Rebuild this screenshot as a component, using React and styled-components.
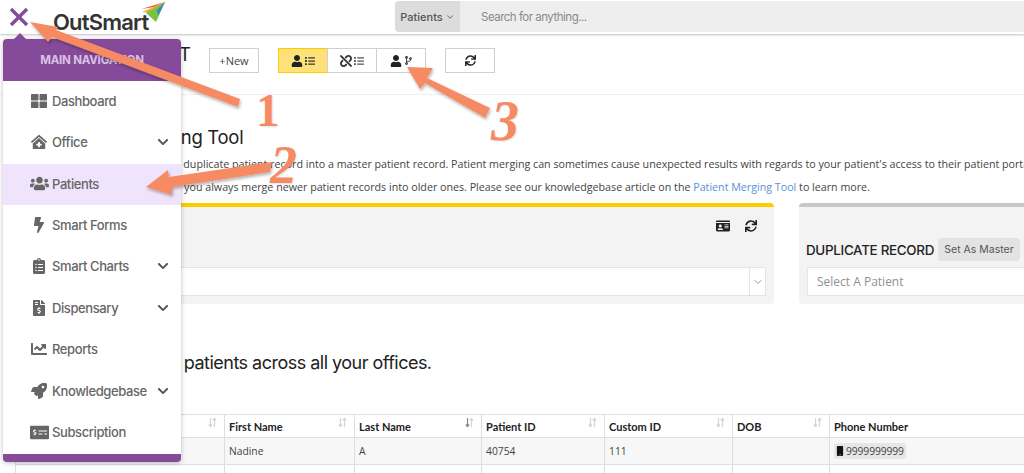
import React from 'react';
import styled, { createGlobalStyle } from 'styled-components';
import {
  FaThLarge,
  FaUsers,
  FaBolt,
  FaClipboardList,
  FaFileInvoiceDollar,
  FaChartLine,
  FaRocket,
  FaMoneyCheckAlt,
  FaChevronDown,
  FaUser,
  FaList,
  FaUnlink,
  FaCodeBranch,
  FaSync,
  FaIdCard,
  FaMobile,
  FaClinicMedical,
} from 'react-icons/fa';
import { LuChevronDown } from 'react-icons/lu';

const GlobalStyle = createGlobalStyle`
  html, body {
    margin: 0;
    padding: 0;
    background: #fff;
    font-family: "Open Sans", "Liberation Sans", sans-serif;
  }
`;

const Page = styled.div`
  position: relative;
  width: 1024px;
  height: 473px;
  overflow: hidden;
  background: #fff;
`;

const Header = styled.header`
  display: flex;
  align-items: flex-start;
  height: 34px;
  box-shadow: 0 1px 2px rgba(0, 0, 0, 0.25);
`;

const Brand = styled.div`
  display: flex;
  align-items: flex-start;
  width: 395px;
  flex-shrink: 0;
  padding: 8px 0 0 10px;
  box-sizing: border-box;
`;

const LogoText = styled.span`
  font-family: Inter, sans-serif;
  font-size: 22px;
  font-weight: 600;
  line-height: 26px;
  letter-spacing: -0.8px;
  color: #333;
  margin: 1px 0 0 43px;
`;

const LogoMark = styled.svg`
  margin: -7px 0 0 -9px;
`;

const SearchBar = styled.div`
  display: flex;
  flex: 1;
  height: 31px;
  margin-top: 1px;
  background: #eeeeee;
  border-radius: 4px 0 0 4px;
  overflow: hidden;
  font-family: Inter, sans-serif;
`;

const SearchScope = styled.div`
  display: flex;
  align-items: center;
  justify-content: center;
  gap: 2px;
  width: 65px;
  background: #dcdcdc;
  color: #555;
  font-size: 11px;
  font-weight: 500;
`;

const SearchHint = styled.div`
  display: flex;
  align-items: center;
  padding-left: 21px;
  color: #8a8a8a;
  font-size: 11.5px;
  letter-spacing: -0.5px;
`;

const Toolbar = styled.div`
  display: flex;
  align-items: flex-start;
  box-sizing: border-box;
  height: 61px;
  padding: 14px 0 0 15px;
  border-bottom: 1px solid #f0f0f0;
`;

const PageTitle = styled.h1`
  width: 176px;
  margin: -6px 18px 0 0;
  text-align: right;
  font-family: Inter, sans-serif;
  font-size: 18.5px;
  line-height: 24px;
  font-weight: 400;
  color: #222;
`;

const ToolButton = styled.button`
  display: flex;
  align-items: center;
  justify-content: center;
  gap: 2px;
  width: ${(p) => p.$width || 50}px;
  height: 25px;
  margin-left: ${(p) => p.$gap || 0}px;
  padding: 0;
  background: ${(p) => (p.$active ? '#ffe17a' : '#fff')};
  border: 1px solid ${(p) => (p.$active ? '#ffcc00' : '#cfcfcf')};
  color: #444;
  font-family: "Open Sans", sans-serif;
  font-size: 11px;
`;

const ToolGroup = styled.div`
  display: flex;
  margin-left: 19px;
  & > button + button {
    margin-left: -1px;
  }
`;

const Content = styled.main`
  padding: 0 0 0 15px;
`;

const ToolHeading = styled.h2`
  margin: 31px 0 0 54px;
  font-family: Inter, sans-serif;
  font-size: 18.5px;
  line-height: 22px;
  font-weight: 400;
  letter-spacing: -0.3px;
  color: #222;
`;

const Note = styled.p`
  margin: ${(p) => p.$top}px 0 0 ${(p) => p.$indent}px;
  font-size: 10.7px;
  line-height: 16px;
  color: #444;
  white-space: nowrap;
`;

const NoteLink = styled.a`
  color: #5b8fd6;
`;

const Cards = styled.div`
  display: flex;
  gap: 25px;
  margin-top: 8px;
`;

const Card = styled.section`
  display: flex;
  flex-direction: column;
  flex: none;
  box-sizing: border-box;
  width: ${(p) => p.$width}px;
  height: 101px;
  padding: 0 8px 8px;
  background: #f3f3f3;
  border-top: 4px solid ${(p) => p.$accent};
  border-radius: 4px;
`;

const CardIcons = styled.div`
  display: flex;
  justify-content: flex-end;
  align-items: center;
  gap: 15px;
  height: 38px;
  padding-right: 9px;
  color: #222;
`;

const CardTitle = styled.div`
  display: flex;
  align-items: center;
  margin: auto 0 6px -1px;
`;

const RecordLabel = styled.span`
  font-family: Inter, sans-serif;
  font-size: 13.4px;
  font-weight: 500;
  letter-spacing: -0.3px;
  color: #222;
`;

const MasterButton = styled.button`
  width: 82px;
  height: 23px;
  margin-left: 4px;
  padding: 0;
  border: 0;
  border-radius: 4px;
  background: #e3e3e3;
  font-family: Inter, sans-serif;
  font-size: 10.5px;
  color: #555;
`;

const PatientSelect = styled.div`
  display: flex;
  align-items: center;
  justify-content: space-between;
  flex: none;
  box-sizing: border-box;
  height: 29px;
  margin-top: ${(p) => (p.$pushed ? 'auto' : '0')};
  background: #fff;
  border: 1px solid #e4e4e4;
  color: #8f8f8f;
  font-size: 12px;
  padding-left: 9px;
`;

const SelectArrow = styled.span`
  display: flex;
  align-items: center;
  justify-content: center;
  width: 15px;
  height: 100%;
  border-left: 1px solid #e4e4e4;
  color: #999;
`;

const SubHeading = styled.h2`
  margin: 48px 0 0 81px;
  font-family: Inter, sans-serif;
  font-size: 18px;
  line-height: 22px;
  font-weight: 400;
  letter-spacing: -0.52px;
  color: #222;
  white-space: nowrap;
`;

const Table = styled.table`
  width: 1100px;
  margin-top: 40px;
  table-layout: fixed;
  border-collapse: collapse;
  font-size: 10.3px;
  color: #444;
  th, td {
    box-sizing: border-box;
    border: 1px solid #dedede;
    padding: 0 0 0 4px;
    text-align: left;
    white-space: nowrap;
  }
  th {
    position: relative;
    height: 23px;
    font-family: Lato, "Open Sans", sans-serif;
    font-size: 11px;
    font-weight: 700;
    color: #222;
  }
  tbody tr:nth-child(odd) td {
    height: 27px;
    background: #f7f7f7;
  }
  tbody tr:nth-child(even) td {
    height: 27px;
  }
`;

const SortMark = styled.svg`
  position: absolute;
  top: 2px;
  right: 7px;
  stroke: #d4d4d4;
  fill: none;
  stroke-width: 1.2;
`;

const PhoneChip = styled.span`
  display: inline-flex;
  align-items: center;
  gap: 0;
  padding: 1px 2px 1px 1px;
  border-radius: 3px;
  background: #e6e6e6;
  color: #444;
`;

const PhoneDigits = styled.span`
  margin-left: 1px;
  letter-spacing: -0.1px;
`;

const NavMenu = styled.nav`
  position: absolute;
  top: 39px;
  left: 3px;
  width: 178px;
  height: 423px;
  display: flex;
  flex-direction: column;
  background: #fff;
  border-radius: 4px;
  box-shadow: 0 1px 5px rgba(0, 0, 0, 0.25);
  font-family: Inter, sans-serif;
  &::before {
    content: '';
    position: absolute;
    top: -6px;
    left: 11px;
    border-left: 6px solid transparent;
    border-right: 6px solid transparent;
    border-bottom: 6px solid #854a9a;
  }
`;

const NavHeader = styled.div`
  display: flex;
  align-items: center;
  justify-content: center;
  flex: none;
  height: 42px;
  background: #854a9a;
  border-radius: 4px 4px 0 0;
  color: #d9c3e2;
  font-size: 11.5px;
  font-weight: 700;
  letter-spacing: -0.2px;
`;

const NavItem = styled.a`
  display: flex;
  align-items: center;
  flex: 1;
  padding: 0 12px 2px 26px;
  color: #666;
  font-size: 13px;
  font-weight: 500;
  letter-spacing: -0.4px;
  background: ${(p) => (p.$active ? '#efe4fc' : 'transparent')};
`;

const NavIcon = styled.span`
  display: flex;
  align-items: center;
  justify-content: center;
  width: 24px;
  margin: 0 0 0 -2px;
  color: #666;
  font-size: ${(p) => p.$size || 16}px;
`;

const NavLabel = styled.span`
  flex: 1;
  margin-left: 1px;
`;

const NavFooter = styled.div`
  flex: none;
  height: 8px;
  background: #854a9a;
  border-radius: 0 0 4px 4px;
`;

const CloseMark = styled.svg`
  position: absolute;
  top: 7px;
  left: 9px;
`;

const Annotations = styled.svg`
  position: absolute;
  top: 0;
  left: 0;
  pointer-events: none;
`;

const StepNumber = styled.span`
  position: absolute;
  top: ${(p) => p.$y}px;
  left: ${(p) => p.$x}px;
  font-family: "Liberation Serif", serif;
  font-size: ${(p) => p.$size}px;
  line-height: 1;
  font-weight: 700;
  font-style: ${(p) => (p.$slant ? 'italic' : 'normal')};
  color: #f58a63;
  text-shadow: 1px 1px 2px rgba(0, 0, 0, 0.12);
`;

const navItems = [
  { label: 'Dashboard', icon: <FaThLarge /> },
  { label: 'Office', icon: <FaClinicMedical />, more: true },
  { label: 'Patients', icon: <FaUsers />, active: true, size: 19 },
  { label: 'Smart Forms', icon: <FaBolt /> },
  { label: 'Smart Charts', icon: <FaClipboardList />, more: true },
  { label: 'Dispensary', icon: <FaFileInvoiceDollar />, more: true },
  { label: 'Reports', icon: <FaChartLine /> },
  { label: 'Knowledgebase', icon: <FaRocket />, more: true },
  { label: 'Subscription', icon: <FaMoneyCheckAlt />, size: 19 },
];

const columns = [
  { label: 'Office', width: 209 },
  { label: 'First Name', width: 130 },
  { label: 'Last Name', width: 127, active: true },
  { label: 'Patient ID', width: 123 },
  { label: 'Custom ID', width: 128 },
  { label: 'DOB', width: 97 },
  { label: 'Phone Number', width: 286, noSort: true },
];

function SortIcon({ active }) {
  return (
    <SortMark width="9" height="11" viewBox="0 0 9 11">
      <path d="M2.5 1 V9.5 M0.8 7.5 L2.5 9.5 L4.2 7.5" stroke={active ? '#888' : undefined} />
      <path d="M6.5 10 V1.5 M4.8 3.5 L6.5 1.5 L8.2 3.5" />
    </SortMark>
  );
}

export default function App() {
  return (
    <Page>
      <GlobalStyle />
      <Header>
        <Brand>
          <LogoText>OutSmart</LogoText>
          <LogoMark width="28" height="26" viewBox="0 0 28 26">
            <polygon points="2,8 26,1 16,6" fill="#e8643c" />
            <polygon points="3,11 26,1 14,12" fill="#f2b233" />
            <polygon points="7,12 26,1 17,21" fill="#7cc242" />
            <polygon points="18,9 26,1 19,15" fill="#3a86c8" />
          </LogoMark>
        </Brand>
        <SearchBar>
          <SearchScope>
            Patients <LuChevronDown size={10} />
          </SearchScope>
          <SearchHint>Search for anything...</SearchHint>
        </SearchBar>
      </Header>

      <Toolbar>
        <PageTitle>PATIENT</PageTitle>
        <ToolButton>+New</ToolButton>
        <ToolGroup>
          <ToolButton $active>
            <FaUser size={12} color="#222" />
            <FaList size={10} color="#333" />
          </ToolButton>
          <ToolButton>
            <FaUnlink size={12} color="#333" />
            <FaList size={10} color="#555" />
          </ToolButton>
          <ToolButton>
            <FaUser size={12} color="#222" />
            <FaCodeBranch size={9} color="#333" />
          </ToolButton>
        </ToolGroup>
        <ToolButton $gap={19}>
          <FaSync size={11} color="#222" />
        </ToolButton>
      </Toolbar>

      <Content>
        <ToolHeading>Patient Merging Tool</ToolHeading>
        <Note $top={8} $indent={47}>
          Use this tool to merge a duplicate patient record into a master patient record. Patient merging can sometimes cause unexpected results with regards to your patient's access to their patient portal.
        </Note>
        <Note $top={7} $indent={64}>
          We recommend that you always merge newer patient records into older ones. Please see our knowledgebase article on the <NoteLink>Patient Merging Tool</NoteLink> to learn more.
        </Note>

        <Cards>
          <Card $width={759} $accent="#ffcc00">
            <CardIcons>
              <FaIdCard size={14} />
              <FaSync size={12} />
            </CardIcons>
            <PatientSelect $pushed>
              Select A Patient
              <SelectArrow>
                <LuChevronDown size={12} />
              </SelectArrow>
            </PatientSelect>
          </Card>
          <Card $width={300} $accent="#c8c8c8">
            <CardTitle>
              <RecordLabel>DUPLICATE RECORD</RecordLabel>
              <MasterButton>Set As Master</MasterButton>
            </CardTitle>
            <PatientSelect>Select A Patient</PatientSelect>
          </Card>
        </Cards>

        <SubHeading>Search for patients across all your offices.</SubHeading>

        <Table>
          <colgroup>
            {columns.map((c) => (
              <col key={c.label} style={{ width: c.width }} />
            ))}
          </colgroup>
          <thead>
            <tr>
              {columns.map((c) => (
                <th key={c.label}>
                  {c.label}
                  {!c.noSort && <SortIcon active={c.active} />}
                </th>
              ))}
            </tr>
          </thead>
          <tbody>
            <tr>
              <td>Main Office</td>
              <td>Nadine</td>
              <td>A</td>
              <td>40754</td>
              <td>111</td>
              <td></td>
              <td>
                <PhoneChip>
                  <FaMobile size={10} color="#111" />
                  <PhoneDigits>9999999999</PhoneDigits>
                </PhoneChip>
              </td>
            </tr>
            <tr>
              <td></td>
              <td></td>
              <td></td>
              <td></td>
              <td></td>
              <td></td>
              <td></td>
            </tr>
          </tbody>
        </Table>
      </Content>

      <NavMenu>
        <NavHeader>MAIN NAVIGATION</NavHeader>
        {navItems.map((item) => (
          <NavItem key={item.label} $active={item.active}>
            <NavIcon $size={item.size}>{item.icon}</NavIcon>
            <NavLabel>{item.label}</NavLabel>
            {item.more && <FaChevronDown size={12} color="#555" />}
          </NavItem>
        ))}
        <NavFooter />
      </NavMenu>

      <CloseMark width="20" height="20" viewBox="0 0 20 20">
        <path d="M2 2 L18 18 M18 2 L2 18" stroke="#854a9a" strokeWidth="3.4" fill="none" />
      </CloseMark>

      <Annotations width="1024" height="473" viewBox="0 0 1024 473">
        <defs>
          <filter id="arrowShadow" x="-10%" y="-10%" width="120%" height="130%">
            <feDropShadow dx="1" dy="2" stdDeviation="1.5" floodColor="#000" floodOpacity="0.3" />
          </filter>
        </defs>
        <g fill="#f58a63" filter="url(#arrowShadow)">
          <polygon points="30,22 58,27 56,30 240,99 238,107 52,37 48,42" />
          <polygon points="146,187 168,170 169,177 272,162 270,172 172,187 172,195" />
          <polygon points="407,67 433,68 427,78 490,108 485,118 425,83 420,89" />
        </g>
      </Annotations>
      <StepNumber $x={256} $y={87} $size={47}>1</StepNumber>
      <StepNumber $x={270} $y={138} $size={54} $slant>2</StepNumber>
      <StepNumber $x={491} $y={93} $size={56} $slant>3</StepNumber>
    </Page>
  );
}
